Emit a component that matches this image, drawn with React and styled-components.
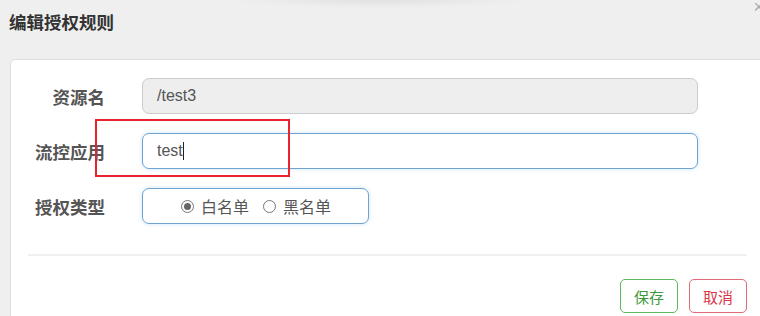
import React from 'react'
import styled, { createGlobalStyle } from 'styled-components'

const GlobalStyle = createGlobalStyle`
  html, body {
    margin: 0;
    padding: 0;
    background: #efefef;
    overflow: hidden;
  }
  body {
    font-family: 'Liberation Sans', 'Noto Sans CJK SC', sans-serif;
  }
`

const Modal = styled.div`
  position: relative;
  width: 760px;
  height: 316px;
  overflow: hidden;
  background: #efefef;
`

const Header = styled.div`
  height: 59px;
  padding: 9px 0 0 9px;
  box-sizing: border-box;
  background: radial-gradient(ellipse 150px 8px at 380px 0, rgba(0, 0, 0, 0.06), transparent);
`

const Title = styled.h4`
  margin: 0;
  font-family: 'Noto Sans CJK SC', sans-serif;
  font-size: 17.5px;
  line-height: 26px;
  font-weight: 700;
  color: #333;
`

const Close = styled.span`
  position: absolute;
  top: -3px;
  right: -4px;
  font-size: 18px;
  color: #aaa;
  font-family: 'Liberation Sans', sans-serif;
`

const Panel = styled.div`
  margin-left: 10px;
  width: 780px;
  height: 280px;
  background: #fff;
  border: 1px solid #ddd;
  border-radius: 5px 0 0 0;
  box-sizing: border-box;
  padding-top: 18px;
`

const Form = styled.div`
  position: relative;
  display: flex;
  flex-direction: column;
  gap: 19px;
`

const Row = styled.div`
  display: flex;
  align-items: center;
  gap: 37px;
  height: 36px;
`

const Label = styled.label`
  width: 94px;
  text-align: right;
  font-family: 'Noto Sans CJK SC', sans-serif;
  font-size: 17.5px;
  font-weight: 700;
  color: #555;
`

const Field = styled.div`
  box-sizing: border-box;
  width: ${(p) => p.$width || 556}px;
  height: 36px;
  border: 1px solid ${(p) => (p.$focus ? '#6fa3d0' : '#ccc')};
  border-radius: 7px;
  background: ${(p) => (p.$disabled ? '#eee' : '#fff')};
  box-shadow: ${(p) => (p.$focus ? '0 0 4px rgba(102, 175, 233, 0.35)' : 'none')};
  padding-left: 14px;
  display: flex;
  align-items: center;
  font-size: 16px;
  color: #555;
`

const Caret = styled.span`
  display: inline-block;
  width: 1.5px;
  height: 18px;
  background: #222;
`

const RadioGroup = styled.div`
  display: flex;
  align-items: center;
  gap: 14px;
  margin-left: 24px;
`

const RadioItem = styled.span`
  display: flex;
  align-items: center;
  gap: 7px;
  font-family: 'Noto Sans CJK SC', sans-serif;
  font-size: 16px;
  color: #555;
`

const Dot = styled.span`
  box-sizing: border-box;
  width: 13px;
  height: 13px;
  border-radius: 50%;
  border: 1px solid #777;
  background: #fff;
  display: flex;
  align-items: center;
  justify-content: center;

  &::after {
    content: '';
    width: 7px;
    height: 7px;
    border-radius: 50%;
    background: ${(p) => (p.$checked ? '#666' : 'transparent')};
  }
`

const Highlight = styled.div`
  position: absolute;
  left: 84px;
  top: 41px;
  width: 191px;
  height: 54px;
  border: 2px solid #e8232b;
  pointer-events: none;
`

const Divider = styled.div`
  margin: 30px 0 0 17px;
  width: 719px;
  height: 2px;
  background: #f0f0f0;
`

const Footer = styled.div`
  display: flex;
  gap: 11px;
  width: 736px;
  justify-content: flex-end;
  margin-top: 23px;
`

const Button = styled.button`
  box-sizing: border-box;
  width: 58px;
  height: 34px;
  border-radius: 5px;
  background: #fff;
  border: 1px solid ${(p) => p.$color};
  color: ${(p) => p.$text};
  font-family: 'Noto Sans CJK SC', sans-serif;
  font-size: 15px;
  padding: 0;
`

export default function App() {
  return (
    <>
      <GlobalStyle />
      <Modal>
        <Header>
          <Title>编辑授权规则</Title>
        </Header>
        <Close>×</Close>
        <Panel>
          <Form>
            <Row>
              <Label>资源名</Label>
              <Field $disabled>/test3</Field>
            </Row>
            <Row>
              <Label>流控应用</Label>
              <Field $focus>
                test<Caret />
              </Field>
            </Row>
            <Row>
              <Label>授权类型</Label>
              <Field $focus $width={227}>
                <RadioGroup>
                  <RadioItem>
                    <Dot $checked />
                    白名单
                  </RadioItem>
                  <RadioItem>
                    <Dot />
                    黑名单
                  </RadioItem>
                </RadioGroup>
              </Field>
            </Row>
            <Highlight />
          </Form>
          <Divider />
          <Footer>
            <Button $color="#5cb85c" $text="#3c9a3c">保存</Button>
            <Button $color="#e06a78" $text="#d9364a">取消</Button>
          </Footer>
        </Panel>
      </Modal>
    </>
  )
}
